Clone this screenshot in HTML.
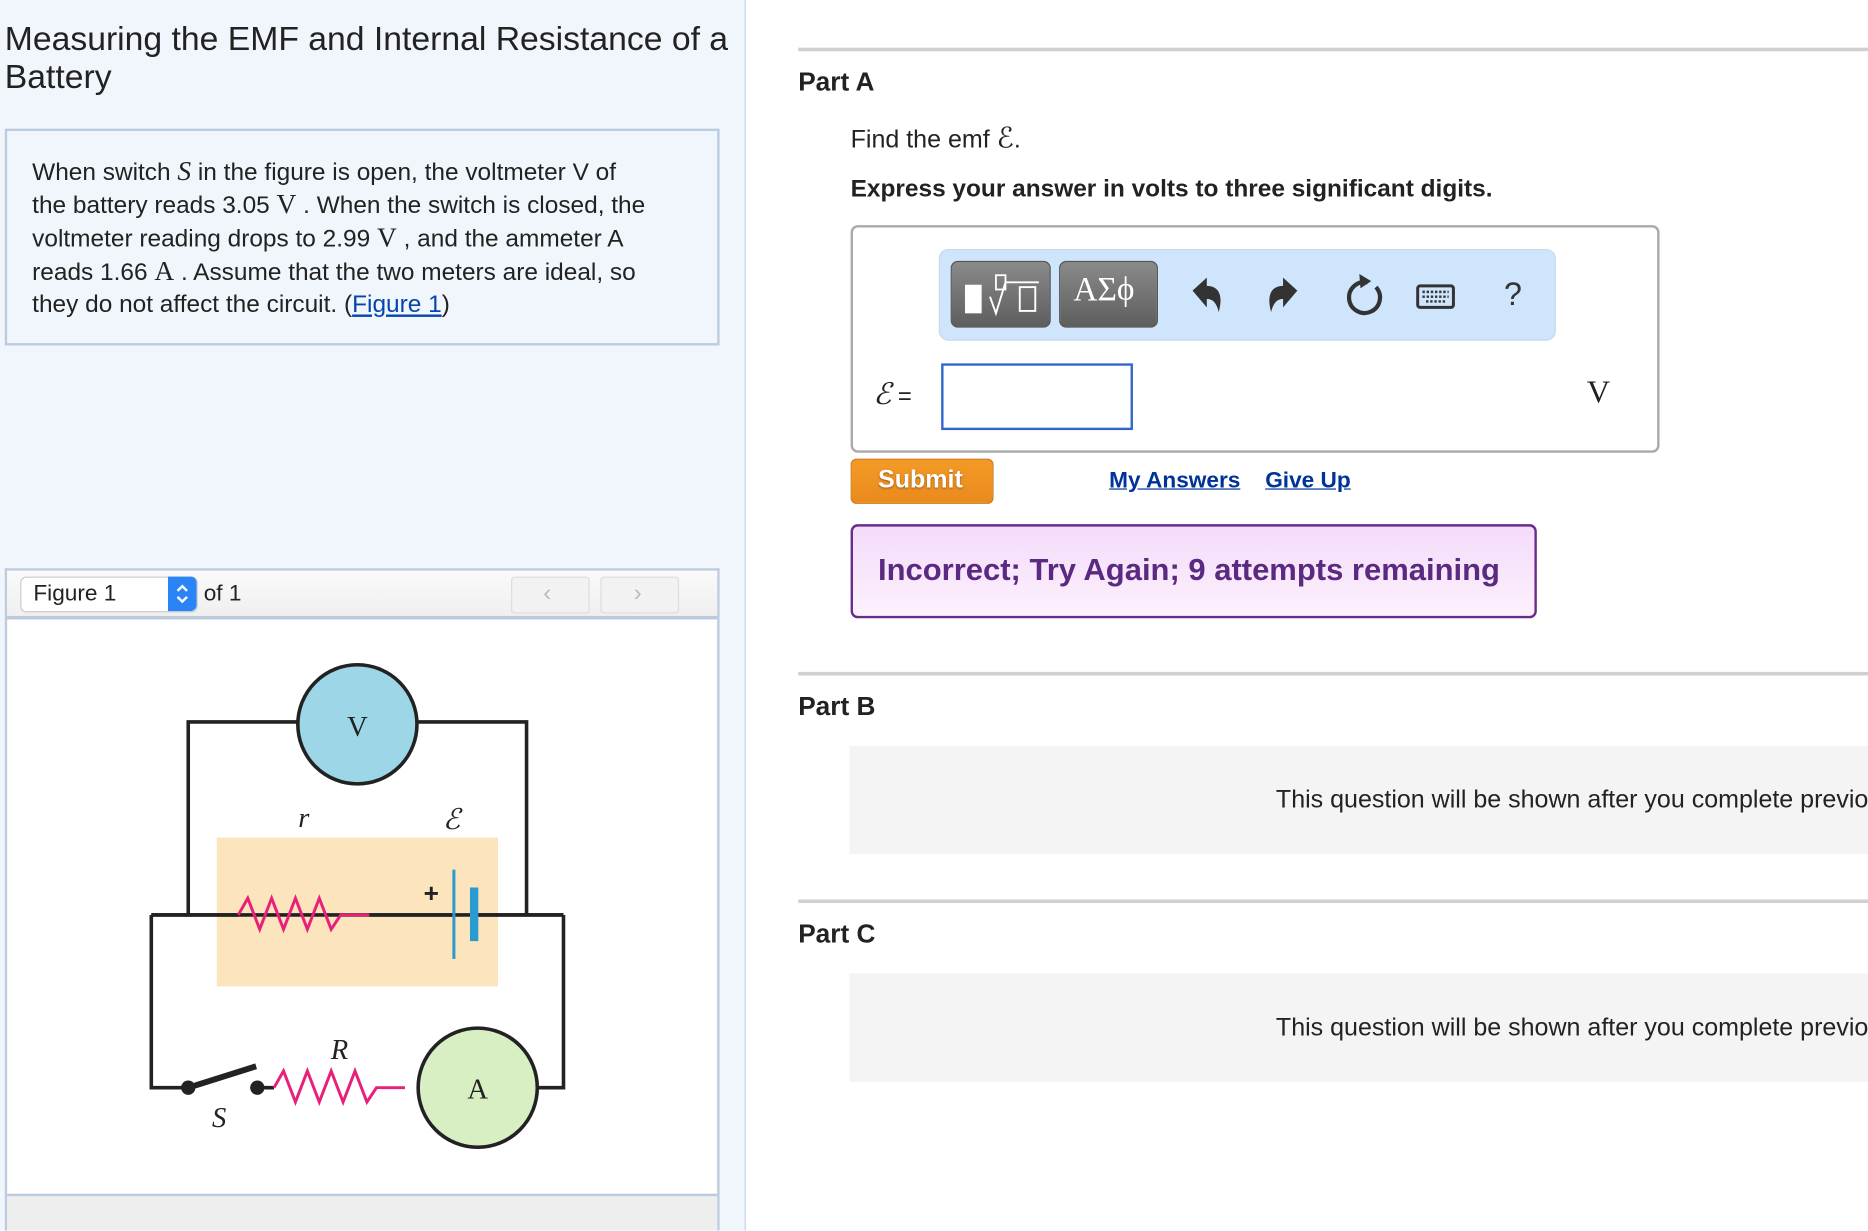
<!DOCTYPE html>
<html><head><meta charset="utf-8"><style>
html,body{margin:0;padding:0;width:1868px;height:1230px;overflow:hidden;background:#fff}
#w{position:absolute;left:0;top:0;width:1568px;height:1033px;transform:scale(1.19133);transform-origin:0 0;font-family:"Liberation Sans",sans-serif;color:#222;overflow:hidden}
.a{position:absolute}
.left{left:0;top:0;width:625px;height:1033px;background:#f1f6fd;border-right:1px solid #c8d4e2}
.t{white-space:nowrap}
.line{height:3px;background:#d0d0d0;left:670px;width:898px}
.ph{font-weight:bold;font-size:22px;left:670px}
.gb{left:713px;width:855px;height:91px;background:#f4f4f4;overflow:hidden}
.gb span{position:absolute;left:358px;top:34px;font-size:21px;white-space:nowrap}
.btn{background:linear-gradient(#8a8a8a,#5e5e5e);border-radius:6px;border:1px solid #555}
.s{font-family:'Liberation Serif',serif;font-size:23px}
</style></head><body><div id="w">
<div class="a left"></div>
<div class="a t" style="left:4px;top:16px;font-size:28.3px;line-height:32px;white-space:normal;width:620px">Measuring the EMF and Internal Resistance of a Battery</div>
<div class="a" style="left:4px;top:108px;width:596px;height:178px;border:2px solid #bcccdf;background:#f1f6fd"></div>
<div class="a t" style="left:27px;top:130px;font-size:20.5px;line-height:27px">When switch <i class="s">S</i> in the figure is open, the voltmeter V of<br>the battery reads 3.05 <span class="s">V</span> . When the switch is closed, the<br>voltmeter reading drops to 2.99 <span class="s">V</span> , and the ammeter A<br>reads 1.66 <span class="s">A</span> . Assume that the two meters are ideal, so<br>they do not affect the circuit. (<span style="color:#0645ad;text-decoration:underline">Figure 1</span>)</div>
<!-- figure -->
<div class="a" style="left:4px;top:477px;width:596px;height:554px;border:2px solid #bcccdf;border-bottom:none;background:#fff"></div>
<div class="a" style="left:6px;top:479px;width:596px;height:38px;background:linear-gradient(#fafafa,#efefef);border-bottom:3px solid #bccbd9"></div>
<div class="a" style="left:17px;top:484px;width:147px;height:28px;border:1px solid #ccc;border-radius:5px;background:#fff"></div>
<div class="a t" style="left:28px;top:488px;font-size:19px">Figure 1</div>
<div class="a" style="left:141px;top:484px;width:24px;height:29px;background:#2a84f5;border-radius:0 5px 5px 0"></div>
<svg class="a" style="left:141px;top:484px" width="24" height="29"><path d="M8 12l4-4 4 4M8 17l4 4 4-4" stroke="#fff" stroke-width="2" fill="none"/></svg>
<div class="a t" style="left:171px;top:488px;font-size:19px">of 1</div>
<div class="a" style="left:429px;top:484px;width:64px;height:29px;border:1px solid #ddd;border-radius:3px;background:#f2f2f2"></div>
<div class="a" style="left:504px;top:484px;width:64px;height:29px;border:1px solid #ddd;border-radius:3px;background:#f2f2f2"></div>
<div class="a t" style="left:456px;top:487px;font-size:20px;color:#bbb">‹</div>
<div class="a t" style="left:532px;top:487px;font-size:20px;color:#bbb">›</div>
<div class="a" style="left:6px;top:1002px;width:596px;height:31px;background:#eeeeee;border-top:2px solid #bcccdf"></div>
<svg class="a" style="left:0;top:0" width="625" height="1033">
<rect x="182" y="703" width="236" height="125" fill="#fce4bc"/>
<g stroke="#222" stroke-width="3" fill="none">
<path d="M158 768V606H250M350 606H442V768M127 768H473M127 768V913H158M473 768V913H451M230 913H216"/>
<path d="M158 913L215 895" stroke-width="5"/>
<path d="M310 768H381M398 768H473M127 768H200"/>
</g>
<circle cx="158" cy="913" r="6" fill="#222"/><circle cx="216" cy="913" r="6" fill="#222"/>
<path d="M200 768l8-14 10 26 10-26 10 26 10-26 10 26 10-26 10 26 8-12h24" stroke="#e8207a" stroke-width="2.5" fill="none"/>
<path d="M230 913l8-14 10 26 10-26 10 26 10-26 10 26 10-26 10 26 8-12h24" stroke="#e8207a" stroke-width="2.5" fill="none"/>
<line x1="381" y1="730" x2="381" y2="805" stroke="#2a9bd0" stroke-width="2.5"/>
<line x1="398" y1="745" x2="398" y2="790" stroke="#2a9bd0" stroke-width="7"/>
<circle cx="300" cy="608" r="50" fill="#9dd6e6" stroke="#222" stroke-width="3"/>
<circle cx="401" cy="913" r="50" fill="#d8efc4" stroke="#222" stroke-width="3"/>
<g font-family="Liberation Serif,serif" font-size="24" text-anchor="middle" fill="#222">
<text x="300" y="618">V</text><text x="401" y="922">A</text>
<text x="255" y="694" font-style="italic">r</text><text x="379" y="696" font-style="italic">ℰ</text>
<text x="285" y="889" font-style="italic">R</text><text x="184" y="946" font-style="italic">S</text>
<text x="362" y="757" font-family="Liberation Sans" font-weight="bold" font-size="22">+</text>
</g>
</svg>
<!-- right -->
<div class="a line" style="top:40px"></div>
<div class="a ph t" style="top:56px">Part A</div>
<div class="a t" style="left:714px;top:102px;font-size:21px">Find the emf <span style="font-family:'Liberation Serif',serif;font-size:24px">ℰ</span>.</div>
<div class="a t" style="left:714px;top:147px;font-size:20.5px;font-weight:bold">Express your answer in volts to three significant digits.</div>
<div class="a" style="left:714px;top:189px;width:675px;height:187px;border:2px solid #aaa;border-radius:6px"></div>
<div class="a" style="left:788px;top:209px;width:516px;height:75px;background:#cfe5fb;border:1px solid #c6d9ec;border-radius:8px"></div>
<div class="a btn" style="left:798px;top:219px;width:82px;height:54px"></div>
<div class="a btn" style="left:889px;top:219px;width:81px;height:54px"></div>
<svg class="a" style="left:798px;top:219px" width="82" height="54"><rect x="12" y="20" width="14" height="24" fill="#fff"/><rect x="38" y="12" width="8" height="12" fill="none" stroke="#fff" stroke-width="1.5"/><path d="M33 30l5 14 8-26h28" stroke="#fff" stroke-width="1.6" fill="none"/><rect x="58" y="22" width="13" height="20" fill="none" stroke="#fff" stroke-width="1.6"/></svg>
<div class="a t" style="left:901px;top:228px;font-family:'Liberation Serif',serif;font-size:28px;color:#fff">ΑΣϕ</div>
<svg class="a" style="left:995px;top:226px" width="300" height="42"><g fill="#333">
<path d="M6 18l12-11v7c10 0 14 8 10 22-2-8-5-11-10-11v7z"/>
<path d="M94 18l-12-11v7c-10 0-14 8-10 22 2-8 5-11 10-11v7z"/>
</g>
<path d="M153 11a13 13 0 1 0 7 4" stroke="#333" stroke-width="3.5" fill="none"/><path d="M146 4l10 6-9 6z" fill="#333"/>
<rect x="195" y="14" width="30" height="18" rx="2" fill="none" stroke="#333" stroke-width="2.5"/><path d="M199 19h22M199 23h22M202 27h16" stroke="#333" stroke-width="2" stroke-dasharray="2 1.5"/>
<text x="275" y="30" font-family="Liberation Sans" font-size="27" text-anchor="middle" fill="#333">?</text></svg>
<div class="a t" style="left:733px;top:316px;font-size:20px"><span style="font-family:'Liberation Serif',serif;font-size:25px;font-style:italic">ℰ</span> =</div>
<div class="a" style="left:790px;top:305px;width:157px;height:52px;border:2px solid #3366cc;background:#fff"></div>
<div class="a t" style="left:1332px;top:314px;font-family:'Liberation Serif',serif;font-size:27px">V</div>
<div class="a" style="left:714px;top:385px;width:118px;height:36px;background:linear-gradient(#f39a26,#ea8a1d);border:1px solid #d07a1a;border-radius:5px"></div>
<div class="a t" style="left:737px;top:391px;font-size:21px;font-weight:bold;color:#fff;text-shadow:0 1px 2px #9a5a10">Submit</div>
<div class="a t" style="left:931px;top:393px;font-size:19px;font-weight:bold;color:#003399;text-decoration:underline">My Answers</div>
<div class="a t" style="left:1062px;top:393px;font-size:19px;font-weight:bold;color:#003399;text-decoration:underline">Give Up</div>
<div class="a" style="left:714px;top:440px;width:572px;height:75px;border:2px solid #6a2c8a;border-radius:6px;background:linear-gradient(#f3dbfa,#fdf1fd)"></div>
<div class="a t" style="left:737px;top:463px;font-size:26px;font-weight:bold;color:#5a2a80">Incorrect; Try Again; 9 attempts remaining</div>
<div class="a line" style="top:564px"></div>
<div class="a ph t" style="top:580px">Part B</div>
<div class="a gb" style="top:626px"><span>This question will be shown after you complete previous question(s).</span></div>
<div class="a line" style="top:755px"></div>
<div class="a ph t" style="top:771px">Part C</div>
<div class="a gb" style="top:817px"><span>This question will be shown after you complete previous question(s).</span></div>
</div></body></html>
